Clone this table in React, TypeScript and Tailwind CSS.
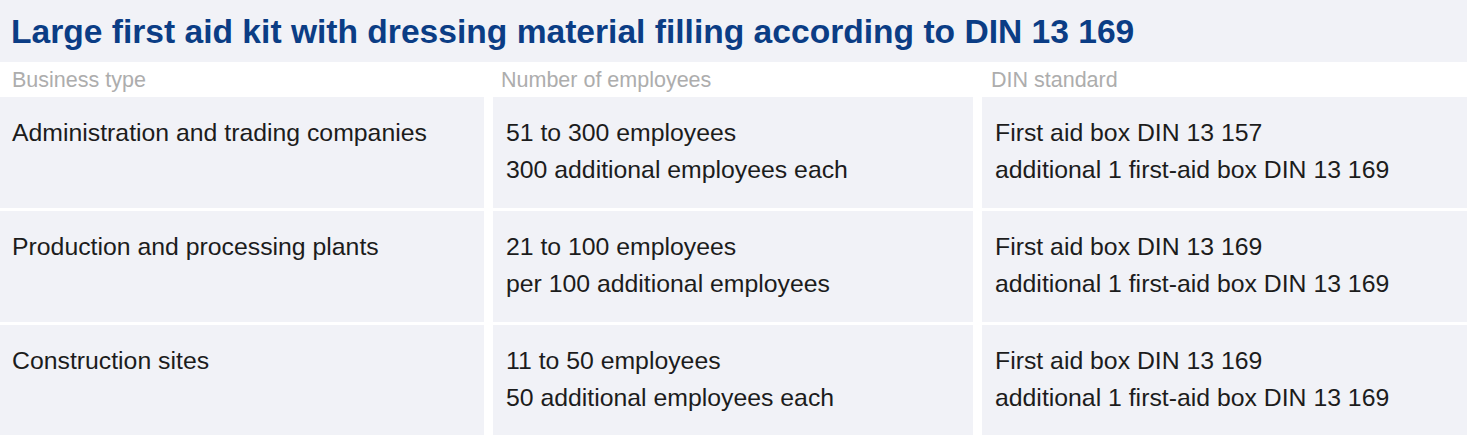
import React from "react";

const rows = [
  {
    type: "Administration and trading companies",
    emp: ["51 to 300 employees", "300 additional employees each"],
    din: ["First aid box DIN 13 157", "additional 1 first-aid box DIN 13 169"],
  },
  {
    type: "Production and processing plants",
    emp: ["21 to 100 employees", "per 100 additional employees"],
    din: ["First aid box DIN 13 169", "additional 1 first-aid box DIN 13 169"],
  },
  {
    type: "Construction sites",
    emp: ["11 to 50 employees", "50 additional employees each"],
    din: ["First aid box DIN 13 169", "additional 1 first-aid box DIN 13 169"],
  },
];

export default function App() {
  return (
    <div
      className="w-[1467px] h-[435px] bg-white overflow-hidden"
      style={{ fontFamily: '"Liberation Sans", Arial, sans-serif' }}
    >
      <div className="h-[62px] bg-[#f1f2f7] pl-[11px] pt-[14px]">
        <h1 className="text-[33.6px] leading-[36px] font-bold text-[#0b3d85] whitespace-nowrap">
          Large first aid kit with dressing material filling according to DIN 13 169
        </h1>
      </div>
      <div className="grid grid-cols-[484px_480px_1fr] gap-x-[9px]">
        <div className="h-[35px] pl-[12px] pt-[6px] text-[21.5px] leading-[24px] text-[#adadad]">
          Business type
        </div>
        <div className="h-[35px] pl-[8px] pt-[6px] text-[21.5px] leading-[24px] text-[#adadad]">
          Number of employees
        </div>
        <div className="h-[35px] pl-[9px] pt-[6px] text-[21.5px] leading-[24px] text-[#adadad]">
          DIN standard
        </div>
      </div>
      <div className="flex flex-col gap-y-[3px]">
        {rows.map((r, i) => (
          <div key={i} className="grid grid-cols-[484px_480px_1fr] gap-x-[9px] h-[111px]">
            <div className="bg-[#f1f2f7] pl-[12px] pt-[16.5px] text-[24.8px] leading-[37px] text-[#1c1c1c] whitespace-nowrap">
              {r.type}
            </div>
            <div className="bg-[#f1f2f7] pl-[13px] pt-[16.5px] text-[24.8px] leading-[37px] text-[#1c1c1c] whitespace-nowrap">
              {r.emp.map((t, j) => (
                <div key={j}>{t}</div>
              ))}
            </div>
            <div className="bg-[#f1f2f7] pl-[13px] pt-[16.5px] text-[24.8px] leading-[37px] text-[#1c1c1c] whitespace-nowrap">
              {r.din.map((t, j) => (
                <div key={j}>{t}</div>
              ))}
            </div>
          </div>
        ))}
      </div>
    </div>
  );
}
